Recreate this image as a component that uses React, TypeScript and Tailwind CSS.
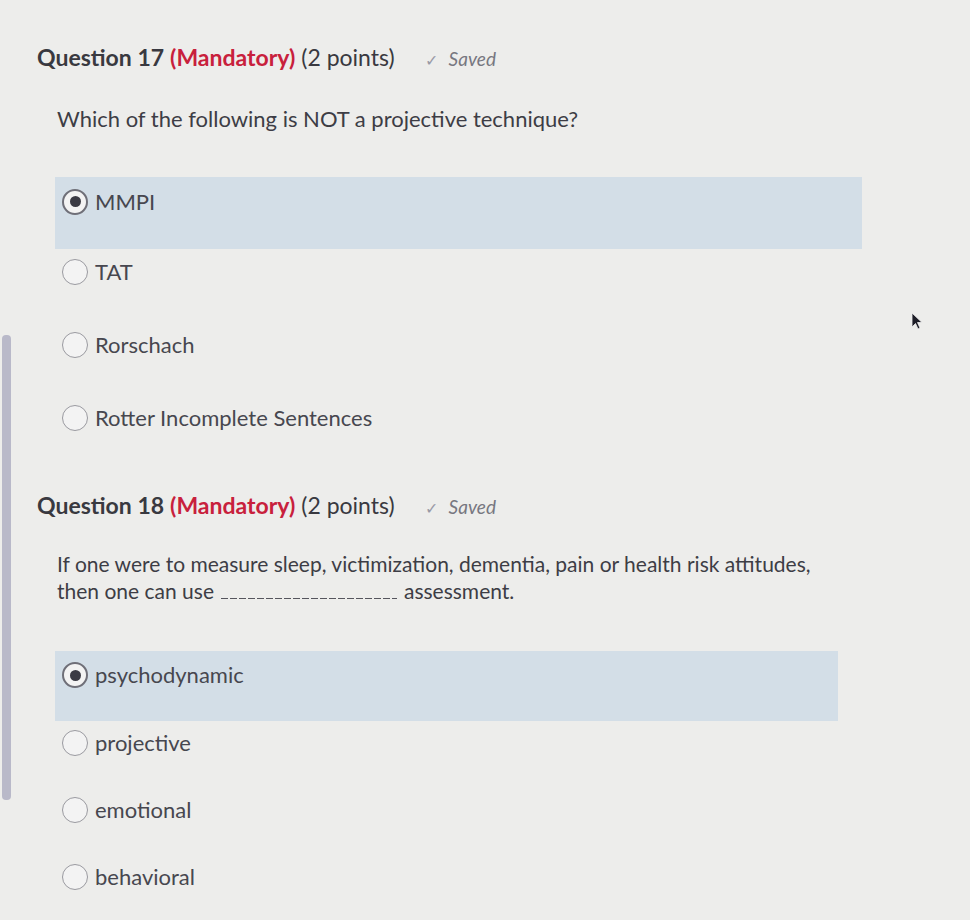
import React from "react";

function Radio({ checked }: { checked: boolean }) {
  return (
    <span
      className={`flex h-[26px] w-[26px] shrink-0 items-center justify-center rounded-full bg-[#f3f3f3] ${
        checked ? "border-[2px] border-[#6f6f78]" : "border-[1.5px] border-[#9a9aa0]"
      }`}
    >
      {checked && <span className="h-[11px] w-[11px] rounded-full bg-[#3b3b44]" />}
    </span>
  );
}

function Option({
  label,
  checked,
  cls,
}: {
  label: string;
  checked?: boolean;
  cls: string;
}) {
  return (
    <div className={`flex items-start gap-[7px] pl-[7px] ${cls} ${checked ? "bg-[#d3dee7]" : ""}`}>
      <Radio checked={!!checked} />
      <span className="text-[22px] leading-[26px] text-[#47474f]">{label}</span>
    </div>
  );
}

function Header({ n }: { n: number }) {
  return (
    <div className="flex items-baseline text-[23px] text-[#393940]">
      <span className="font-bold">Question {n}</span>
      <span className="ml-[6px] font-bold text-[#c8203c]">(Mandatory)</span>
      <span className="ml-[6px]">(2 points)</span>
      <span className="ml-[30px] flex items-baseline gap-[11px] text-[19px] italic text-[#777780]">
        <span className="text-[16px] not-italic text-[#9a9aa6]">✓</span>Saved
      </span>
    </div>
  );
}

export default function App() {
  return (
    <div
      className="relative h-[920px] w-[970px] overflow-hidden bg-[#ededeb]"
      style={{ fontFamily: "Lato, 'Open Sans', sans-serif" }}
    >
      <div className="absolute left-[2px] top-[335px] h-[465px] w-[9px] rounded-sm bg-[#b9b9c9]" />
      <div className="absolute left-[910px] top-[312px]">
        <svg width="14" height="18" viewBox="0 0 14 18">
          <path d="M2 1 L2 15 L5.5 11.5 L8 17 L10 16 L7.5 10.5 L12 10.5 Z" fill="#1e1e28" stroke="#f0f0f0" strokeWidth="0.8" />
        </svg>
      </div>

      <div className="flex flex-col pl-[37px] pt-[40px]">
        <Header n={17} />
        <div className="mt-[27px] pl-[20px] text-[22px] text-[#3d3d45]">Which of the following is NOT a projective technique?</div>
        <div className="mt-[42px] flex flex-col pl-[18px]">
          <Option label="MMPI" checked cls="h-[72px] w-[807px] pt-[12px]" />
          <Option label="TAT" cls="h-[73px] w-[807px] pt-[10px]" />
          <Option label="Rorschach" cls="h-[73px] w-[807px] pt-[10px]" />
          <Option label="Rotter Incomplete Sentences" cls="h-[73px] w-[807px] pt-[10px]" />
        </div>

        <div className="mt-[20px]">
          <Header n={18} />
        </div>
        <div className="mt-[28px] pl-[20px] text-[21px] leading-[27px] text-[#3d3d45]">
          <div>If one were to measure sleep, victimization, dementia, pain or health risk attitudes,</div>
          <div className="flex items-baseline">
            then one can use
            <span className="mx-[7px] inline-block h-[1.5px] w-[176px] bg-[repeating-linear-gradient(90deg,#55555d_0_7px,transparent_7px_9px)]" />
            assessment.
          </div>
        </div>
        <div className="mt-[47px] flex flex-col pl-[18px]">
          <Option label="psychodynamic" checked cls="h-[70px] w-[783px] pt-[11px]" />
          <Option label="projective" cls="h-[67px] w-[783px] pt-[9px]" />
          <Option label="emotional" cls="h-[67px] w-[783px] pt-[9px]" />
          <Option label="behavioral" cls="h-[67px] w-[783px] pt-[9px]" />
        </div>
      </div>
    </div>
  );
}
